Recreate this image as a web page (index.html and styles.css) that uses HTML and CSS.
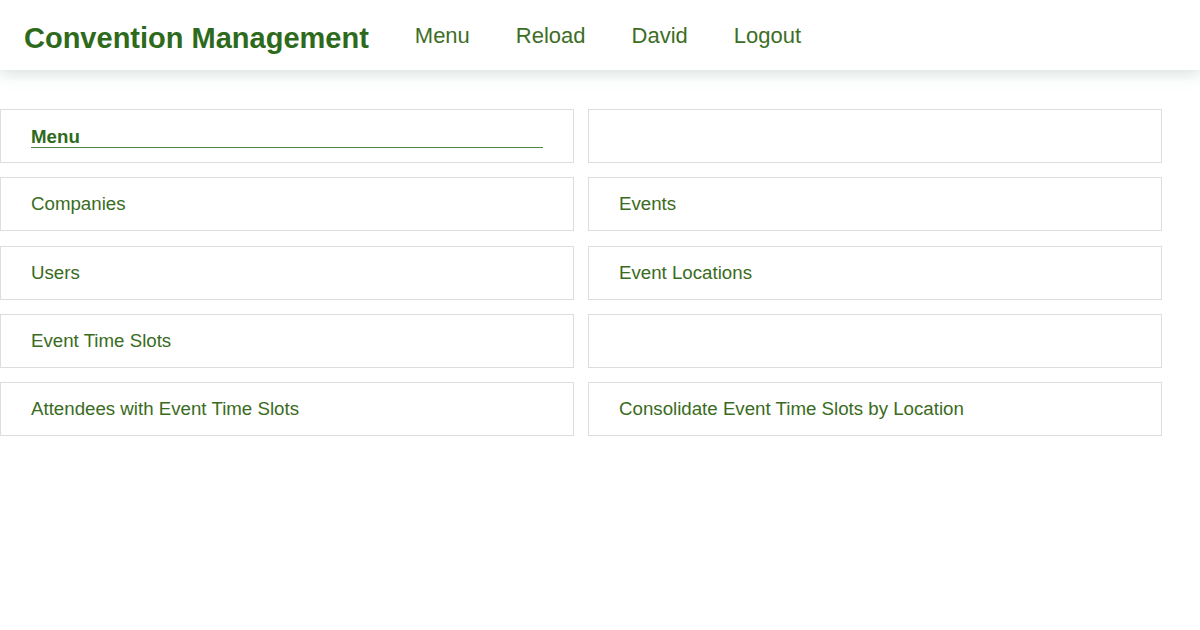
FILE: index.html
```html
<!DOCTYPE html>
<html lang="en">
<head>
<meta charset="utf-8">
<title>Convention Management</title>
<link rel="stylesheet" href="styles.css">
</head>
<body>
<header class="topbar">
  <div class="brand">Convention Management</div>
  <nav class="nav">
    <a class="nav-link" href="#">Menu</a>
    <a class="nav-link" href="#">Reload</a>
    <a class="nav-link" href="#">David</a>
    <a class="nav-link" href="#">Logout</a>
  </nav>
</header>
<main class="grid">
  <div class="card"><span class="card-title">Menu</span></div>
  <div class="card"></div>
  <div class="card"><a class="card-link" href="#">Companies</a></div>
  <div class="card"><a class="card-link" href="#">Events</a></div>
  <div class="card"><a class="card-link" href="#">Users</a></div>
  <div class="card"><a class="card-link" href="#">Event Locations</a></div>
  <div class="card"><a class="card-link" href="#">Event Time Slots</a></div>
  <div class="card"></div>
  <div class="card"><a class="card-link" href="#">Attendees with Event Time Slots</a></div>
  <div class="card"><a class="card-link" href="#">Consolidate Event Time Slots by Location</a></div>
</main>
</body>
</html>
```
FILE: styles.css
```css
* { box-sizing: border-box; }
html, body { margin: 0; padding: 0; background: #ffffff; }
body { font-family: "Liberation Sans", Arial, sans-serif; color: #3a6b22; }
.topbar {
  height: 70px;
  display: flex;
  align-items: center;
  padding-left: 24px;
  gap: 46px;
  background: #fff;
  box-shadow: 0 4px 14px rgba(120, 150, 145, 0.28);
  position: relative;
}
.brand {
  font-size: 29px;
  font-weight: bold;
  color: #2e6a1c;
  margin-top: 6px;
}
.nav { display: flex; gap: 46px; margin-top: 2px; }
.nav-link {
  font-size: 22px;
  color: #3d6e26;
  text-decoration: none;
}
.grid {
  display: grid;
  grid-template-columns: 574px 574px;
  column-gap: 14px;
  row-gap: 14.25px;
  padding-top: 39px;
  width: 1162px;
}
.card {
  height: 54px;
  border: 1.5px solid #dddddd;
  display: flex;
  align-items: center;
  padding: 0 30px;
}
.card-link {
  font-size: 18.7px;
  color: #3a6b22;
  text-decoration: none;
}
.card-title {
  flex: 1;
  font-size: 18.7px;
  font-weight: bold;
  color: #2e6a1c;
  border-bottom: 1.5px solid #58874a;
  line-height: 21px;
  margin-top: 1px;
}
```
